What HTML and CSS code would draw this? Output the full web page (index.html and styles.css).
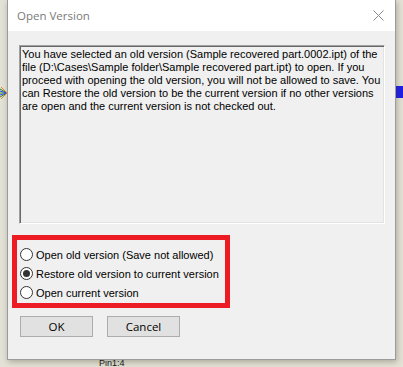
FILE: index.html
```html
<!DOCTYPE html>
<html lang="en">
<head>
<meta charset="UTF-8">
<title>Open Version</title>
<link rel="stylesheet" href="styles.css">
</head>
<body>
  <div class="desk">
    <div class="desk-icon">
      <svg width="8" height="16" viewBox="0 0 8 16">
        <path d="M0 4 L7 8 M0 12 L7 8 M0 8 L7 8" stroke="#2a8a2a" stroke-width="1" fill="none"/>
        <path d="M0 6 L7 8 M0 10 L7 8" stroke="#3050e0" stroke-width="1" fill="none"/>
        <path d="M1 2 L7 8 M1 14 L7 8" stroke="#e08a30" stroke-width="1" fill="none"/>
      </svg>
    </div>
    <div class="desk-bar"></div>
    <div class="desk-label">Pin1:4</div>

    <div class="dialog">
      <div class="title-bar">
        <span class="title">Open Version</span>
        <svg class="close" width="11" height="11" viewBox="0 0 11 11">
          <path d="M0.5 0.5 L10.5 10.5 M10.5 0.5 L0.5 10.5" stroke="#8a8a8a" stroke-width="1"/>
        </svg>
      </div>
      <div class="dialog-body">
        <div class="message">You have selected an old version (Sample recovered part.0002.ipt) of the file (D:\Cases\Sample folder\Sample recovered part.ipt) to open. If you proceed with opening the old version, you will not be allowed to save. You can Restore the old version to be the current version if no other versions are open and the current version is not checked out.</div>

        <div class="options">
          <label class="option"><span class="radio"></span>Open old version (Save not allowed)</label>
          <label class="option"><span class="radio checked"></span>Restore old version to current version</label>
          <label class="option"><span class="radio"></span>Open current version</label>
        </div>

        <div class="buttons">
          <button class="btn">OK</button>
          <button class="btn">Cancel</button>
        </div>
      </div>
    </div>
  </div>
</body>
</html>
```

FILE: styles.css
```css
* {
  margin: 0;
  padding: 0;
  box-sizing: border-box;
}

body {
  background-color: #e4e2d6;
  width: 403px;
  height: 367px;
  overflow: hidden;
}

.desk {
  position: relative;
  height: 367px;
  padding-left: 7px;
}

.desk-icon {
  position: absolute;
  left: 0;
  top: 85px;
}

.desk-bar {
  position: absolute;
  left: 396px;
  top: 86px;
  width: 7px;
  height: 12px;
  background-color: #1f1fe6;
}

.desk-label {
  position: absolute;
  left: 99px;
  top: 359px;
  font-family: "Liberation Sans", sans-serif;
  font-size: 9px;
  line-height: 8px;
  color: #111;
}

.dialog {
  position: relative;
  z-index: 1;
  width: 389px;
  height: 360px;
  background-color: #f0f0f0;
  border: 1px solid #9b9b9b;
  border-top: none;
  box-shadow: 1px 2px 6px rgba(60, 60, 40, 0.35);
  display: flex;
  flex-direction: column;
}

.title-bar {
  height: 31px;
  background-color: #fff;
  display: flex;
  align-items: center;
  justify-content: space-between;
  padding: 0 11px 0 9px;
}

.title {
  font-family: "Open Sans", sans-serif;
  font-size: 11.5px;
  color: #7a7a7a;
  padding-bottom: 1px;
}

.close {
  margin-bottom: 1px;
}

.dialog-body {
  padding: 14px 0 0 4px;
  font-family: "Liberation Sans", sans-serif;
  font-size: 11px;
  color: #000;
}

.message {
  margin-left: 7px;
  width: 366px;
  height: 179px;
  padding: 2px 0 0 2px;
  line-height: 13px;
  border-top: 1px solid #a0a0a0;
  border-left: 1px solid #a0a0a0;
  border-right: 1px solid #fff;
  border-bottom: 1px solid #fff;
  box-shadow: inset 1px 1px 0 #696969, inset -1px -1px 0 #e3e3e3;
}

.options {
  margin-top: 11px;
  width: 218px;
  height: 73px;
  border: 5px solid #ed1c24;
  padding: 5px 0 0 3px;
  display: flex;
  flex-direction: column;
}

.option {
  height: 19px;
  display: flex;
  align-items: center;
  gap: 3px;
  font-size: 11px;
  white-space: nowrap;
}

.radio {
  width: 13px;
  height: 13px;
  border: 1px solid #333;
  border-radius: 50%;
  background-color: #fff;
  display: flex;
  align-items: center;
  justify-content: center;
}

.radio.checked::after {
  content: "";
  width: 7px;
  height: 7px;
  border-radius: 50%;
  background-color: #333;
}

.buttons {
  margin-top: 8px;
  padding-left: 8px;
  display: flex;
  gap: 14px;
}

.btn {
  width: 73px;
  height: 21px;
  background-color: #e1e1e1;
  border: 1px solid #adadad;
  font-family: "Open Sans", sans-serif;
  font-size: 11.5px;
  color: #000;
}
```
